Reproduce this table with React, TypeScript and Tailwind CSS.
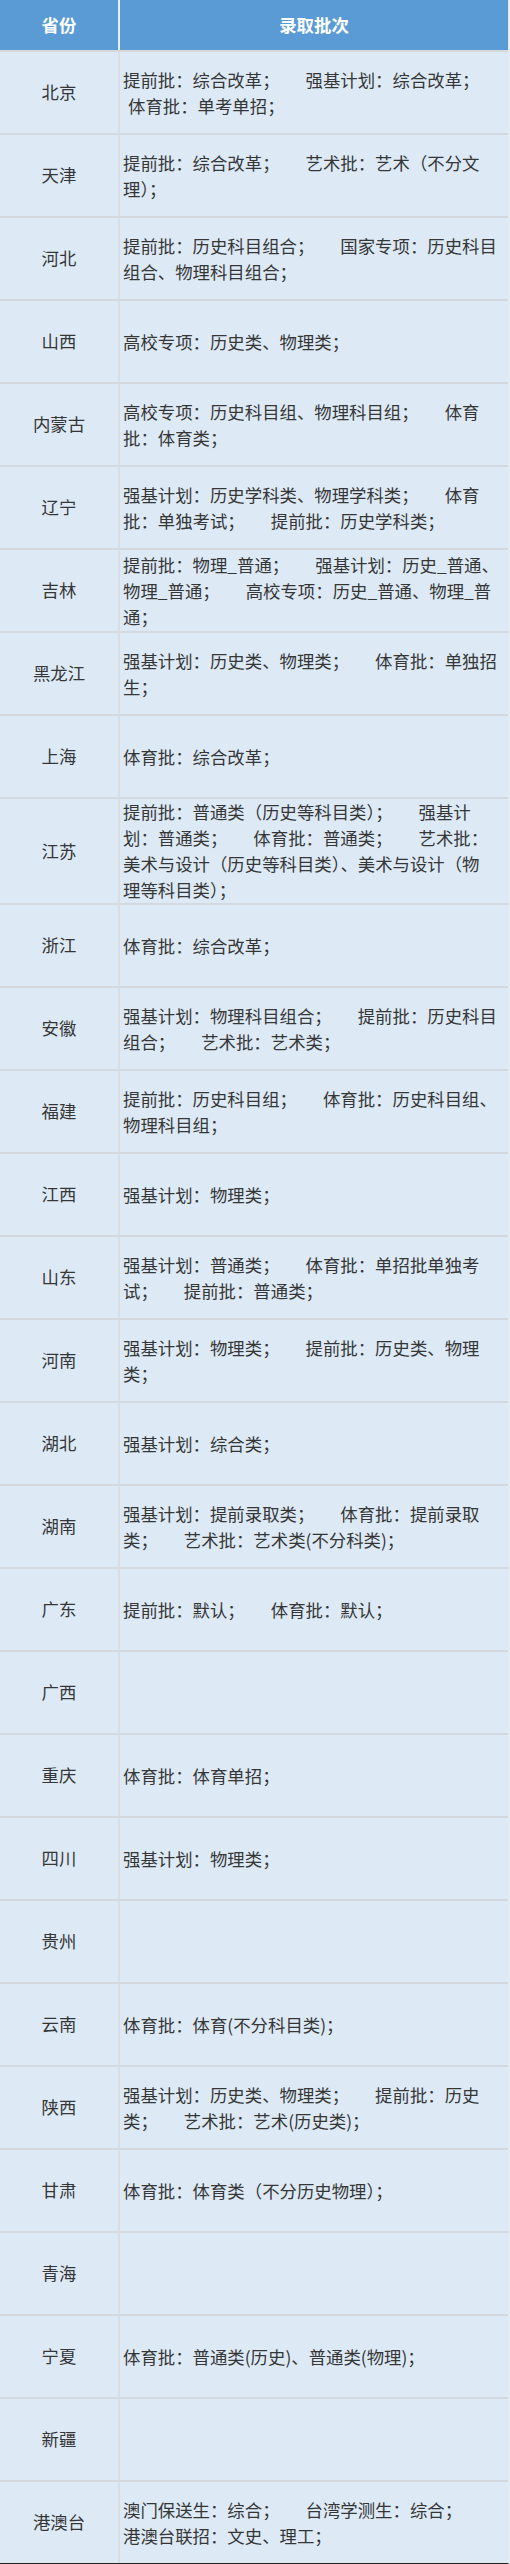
const rows: { name: string; lines: string[]; tall?: boolean }[] = [
  { name: "北京", lines: ["提前批：综合改革；|强基计划：综合改革；", "^体育批：单考单招；"] },
  { name: "天津", lines: ["提前批：综合改革；|艺术批：艺术（不分文", "理）；"] },
  { name: "河北", lines: ["提前批：历史科目组合；|国家专项：历史科目", "组合、物理科目组合；"] },
  { name: "山西", lines: ["高校专项：历史类、物理类；"] },
  { name: "内蒙古", lines: ["高校专项：历史科目组、物理科目组；|体育", "批：体育类；"] },
  { name: "辽宁", lines: ["强基计划：历史学科类、物理学科类；|体育", "批：单独考试；|提前批：历史学科类；"] },
  {
    name: "吉林",
    lines: ["提前批：物理_普通；|强基计划：历史_普通、", "物理_普通；|高校专项：历史_普通、物理_普", "通；"],
  },
  { name: "黑龙江", lines: ["强基计划：历史类、物理类；|体育批：单独招", "生；"] },
  { name: "上海", lines: ["体育批：综合改革；"] },
  {
    name: "江苏",
    tall: true,
    lines: [
      "提前批：普通类（历史等科目类）；|强基计",
      "划：普通类；|体育批：普通类；|艺术批：",
      "美术与设计（历史等科目类）、美术与设计（物",
      "理等科目类）；",
    ],
  },
  { name: "浙江", lines: ["体育批：综合改革；"] },
  { name: "安徽", lines: ["强基计划：物理科目组合；|提前批：历史科目", "组合；|艺术批：艺术类；"] },
  { name: "福建", lines: ["提前批：历史科目组；|体育批：历史科目组、", "物理科目组；"] },
  { name: "江西", lines: ["强基计划：物理类；"] },
  { name: "山东", lines: ["强基计划：普通类；|体育批：单招批单独考", "试；|提前批：普通类；"] },
  { name: "河南", lines: ["强基计划：物理类；|提前批：历史类、物理", "类；"] },
  { name: "湖北", lines: ["强基计划：综合类；"] },
  { name: "湖南", lines: ["强基计划：提前录取类；|体育批：提前录取", "类；|艺术批：艺术类(不分科类)；"] },
  { name: "广东", lines: ["提前批：默认；|体育批：默认；"] },
  { name: "广西", lines: [] },
  { name: "重庆", lines: ["体育批：体育单招；"] },
  { name: "四川", lines: ["强基计划：物理类；"] },
  { name: "贵州", lines: [] },
  { name: "云南", lines: ["体育批：体育(不分科目类)；"] },
  { name: "陕西", lines: ["强基计划：历史类、物理类；|提前批：历史", "类；|艺术批：艺术(历史类)；"] },
  { name: "甘肃", lines: ["体育批：体育类（不分历史物理）；"] },
  { name: "青海", lines: [] },
  { name: "宁夏", lines: ["体育批：普通类(历史)、普通类(物理)；"] },
  { name: "新疆", lines: [] },
  { name: "港澳台", lines: ["澳门保送生：综合；|台湾学测生：综合；", "港澳台联招：文史、理工；"] },
];

// "|" = wide gap between items, "^" = small leading space
function Line({ text }: { text: string }) {
  const lead = text.startsWith("^");
  const parts = (lead ? text.slice(1) : text).split("|");
  return (
    <div className="whitespace-nowrap leading-[26px]">
      {lead && <span className="inline-block w-[5px]" />}
      {parts.map((p, i) => (
        <span key={i}>
          {i > 0 && <span className="inline-block w-[26px]" />}
          {p}
        </span>
      ))}
    </div>
  );
}

export default function App() {
  return (
    <div
      className="w-[510px] bg-white text-[17.4px] text-[#363636]"
      style={{ fontFamily: '"Noto Sans CJK SC", "Microsoft YaHei", sans-serif' }}
    >
      <div className="border-r-2 border-b-2 border-r-[#e3ebf3] border-b-[#222]">
        <div className="flex h-[50px] bg-[#5b9bd5] font-bold text-white">
          <div className="flex w-[120px] items-center justify-center border-r-2 border-[#e6eef7]">省份</div>
          <div className="flex flex-1 items-center justify-center">录取批次</div>
        </div>
        {rows.map((r) => (
          <div
            key={r.name}
            className={`flex border-t-2 border-[#d3d9df] bg-[#ddeaf6] ${r.tall ? "h-[106px]" : "h-[83px]"}`}
          >
            <div className="flex w-[120px] shrink-0 items-center justify-center border-r-2 border-[#d8dee4]">
              {r.name}
            </div>
            <div className="flex flex-1 flex-col justify-center pl-[3px]">
              {r.lines.map((l, i) => (
                <Line key={i} text={l} />
              ))}
            </div>
          </div>
        ))}
      </div>
    </div>
  );
}
